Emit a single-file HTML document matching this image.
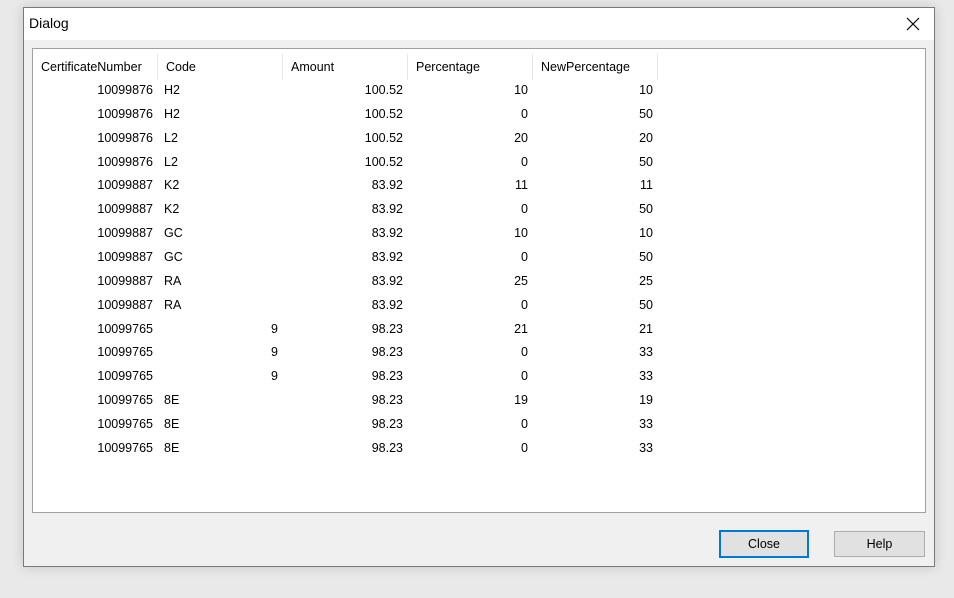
<!DOCTYPE html>
<html><head><style>
body{margin:0;width:954px;height:598px;background:#e9e9e9;font-family:"Liberation Sans",sans-serif;font-size:12.5px;color:#000;position:relative;overflow:hidden}
.win{position:absolute;left:23px;top:7px;width:910px;height:558px;border:1px solid #7a7a7a;background:#f0f0f0;box-shadow:0 0 12px rgba(0,0,0,.15)}
.title{position:absolute;left:0;top:0;width:910px;height:32px;background:#fff}
.title span{position:absolute;left:5px;top:7px;font-size:14px}
.x{position:absolute;left:882px;top:9px}
.tbl{position:absolute;left:8px;top:40px;width:892px;height:463px;border:1px solid #a0a0a0;background:#fff}
.h{position:absolute;top:5px;height:26px;line-height:26px;border-right:1px solid #e5e5e5;font-size:12.5px}
.c{position:absolute;height:24px;line-height:24px;font-size:12.5px}
.btn{position:absolute;top:523px;height:24px;line-height:24px;text-align:center;background:#e1e1e1;border:1px solid #adadad}
</style></head><body>
<div class="win">
<div class="title"><span>Dialog</span>
<svg class="x" width="14" height="14"><path d="M1 1L13 13M13 1L1 13" stroke="#000" stroke-width="1.2"/></svg></div>
<div class="tbl" id="t">
<div class="h" style="left:0;width:125px;padding-left:8px;box-sizing:border-box">CertificateNumber</div>
<div class="h" style="left:125px;width:125px;padding-left:8px;box-sizing:border-box">Code</div>
<div class="h" style="left:250px;width:125px;padding-left:8px;box-sizing:border-box">Amount</div>
<div class="h" style="left:375px;width:125px;padding-left:8px;box-sizing:border-box">Percentage</div>
<div class="h" style="left:500px;width:125px;padding-left:8px;box-sizing:border-box">NewPercentage</div>
</div>
<div class="btn" style="left:695px;width:86px;border:2px solid #0078d7;top:522px">Close</div>
<div class="btn" style="left:810px;width:89px">Help</div>
</div>
<script>
var d=[["10099876","H2","","100.52","10","10"],["10099876","H2","","100.52","0","50"],["10099876","L2","","100.52","20","20"],["10099876","L2","","100.52","0","50"],["10099887","K2","","83.92","11","11"],["10099887","K2","","83.92","0","50"],["10099887","GC","","83.92","10","10"],["10099887","GC","","83.92","0","50"],["10099887","RA","","83.92","25","25"],["10099887","RA","","83.92","0","50"],["10099765","","9","98.23","21","21"],["10099765","","9","98.23","0","33"],["10099765","","9","98.23","0","33"],["10099765","8E","","98.23","19","19"],["10099765","8E","","98.23","0","33"],["10099765","8E","","98.23","0","33"]];
var t=document.getElementById('t'),h='';
d.forEach(function(r,i){var y=29+i*23.85;
h+='<div class="c" style="top:'+y+'px;left:0;width:120px;text-align:right">'+r[0]+'</div>';
h+='<div class="c" style="top:'+y+'px;left:131px">'+r[1]+'</div>';
h+='<div class="c" style="top:'+y+'px;left:125px;width:120px;text-align:right">'+r[2]+'</div>';
h+='<div class="c" style="top:'+y+'px;left:250px;width:120px;text-align:right">'+r[3]+'</div>';
h+='<div class="c" style="top:'+y+'px;left:375px;width:120px;text-align:right">'+r[4]+'</div>';
h+='<div class="c" style="top:'+y+'px;left:500px;width:120px;text-align:right">'+r[5]+'</div>';});
t.insertAdjacentHTML('beforeend',h);
</script>
</body></html>
